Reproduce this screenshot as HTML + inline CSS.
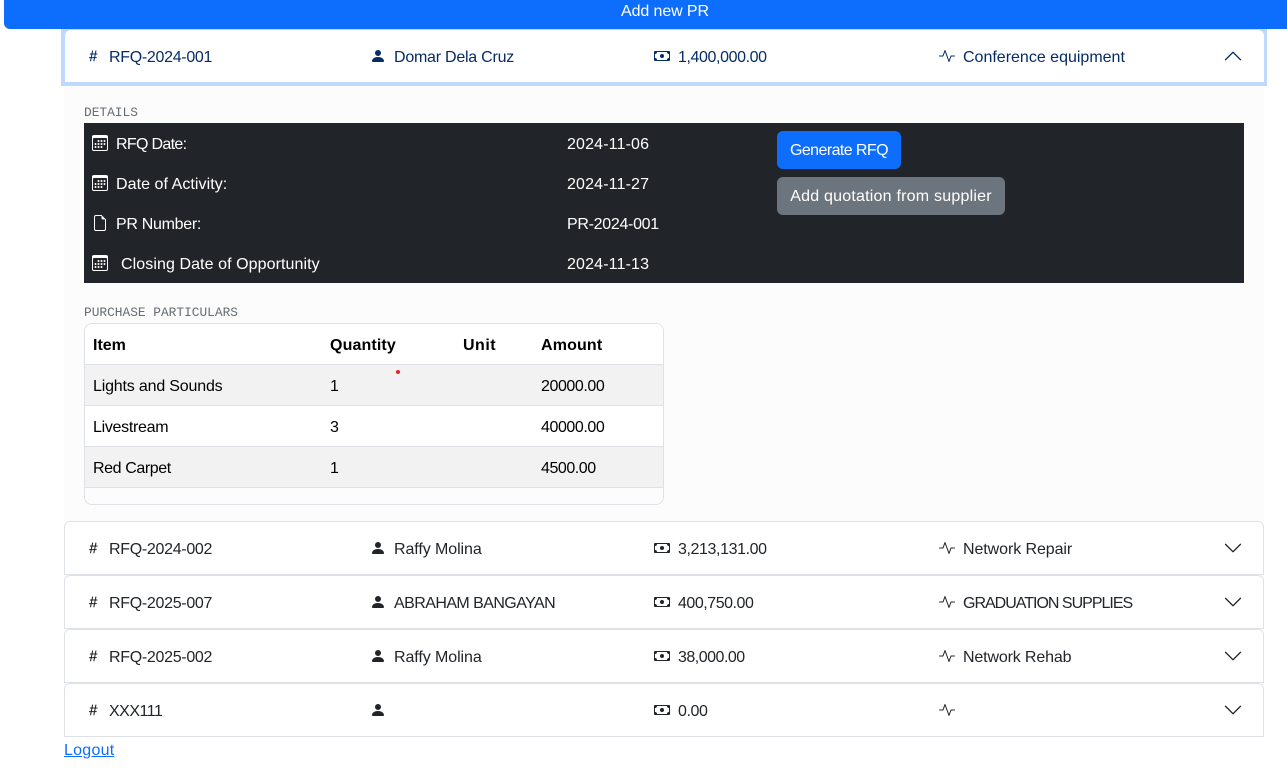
<!DOCTYPE html>
<html lang="en">
<head>
<meta charset="utf-8">
<title>RFQ</title>
<style>
html,body{margin:0;padding:0;background:#fff;}
body{width:1287px;height:771px;overflow:hidden;position:relative;font-family:"Liberation Sans",sans-serif;font-size:16px;color:#212529;}
.a{position:absolute;white-space:nowrap;line-height:24px;margin-top:1px;}
svg{position:absolute;fill:currentColor;display:block;margin-top:-1px;}
svg.w,svg[width="20"]{margin-top:0;}
.top{position:absolute;left:4px;top:0;width:1320px;height:29px;background:#0d6efd;border-radius:0 0 6px 6px;color:#fff;text-align:center;line-height:21px;padding-top:0;}
.top span{position:relative;top:1px;left:1px;letter-spacing:-.1px;}
.item{position:absolute;left:64px;width:1198px;height:52px;background:#fff;border:1px solid #dee2e6;border-radius:6px 6px 0 0;}
.open{position:absolute;left:61px;top:29px;width:1206px;height:57px;background:#bfd9fe;border-radius:0;}
.openin{position:absolute;left:65px;top:30px;width:1199px;height:52px;background:#fff;border-radius:6px 6px 0 0;}
.body{position:absolute;left:64px;top:86px;width:1200px;height:435px;background:#fcfcfc;}
.dark{position:absolute;left:84px;top:123px;width:1160px;height:160px;background:#212529;}
.lbl{position:absolute;left:84px;font-family:"Liberation Mono",monospace;font-size:12.83px;line-height:16px;color:#666c73;white-space:nowrap;}
.w{color:#fff;}
.btn{position:absolute;left:777px;height:38px;border-radius:6px;color:#fff;line-height:40px;text-align:center;white-space:nowrap;}
.tbl{position:absolute;left:84px;top:323px;width:578px;height:180px;border:1px solid #dee2e6;border-radius:8px;background:#fcfcfc;overflow:hidden;}
.r{position:absolute;left:0;width:578px;height:40px;border-bottom:1px solid #dee2e6;}
.k{color:#000;}
.b{font-weight:bold;}
.n{color:#052c65;}
</style>
</head>
<body>
<div class="top"><span>Add new PR</span></div>

<div class="open"></div>
<div class="openin"></div>
<div class="body"></div>

<svg class="n" style="left:85px;top:49px" width="16" height="16" viewBox="0 0 16 16"><path d="M8.39 12.648a1.32 1.32 0 0 0-.015.18c0 .305.21.508.5.508.266 0 .492-.172.555-.477l.554-2.703h1.204c.421 0 .617-.234.617-.547 0-.312-.188-.53-.617-.53h-.985l.516-2.524h1.265c.43 0 .618-.227.618-.547 0-.313-.188-.524-.618-.524h-1.046l.476-2.304a1.06 1.06 0 0 0 .016-.164.51.51 0 0 0-.516-.516.54.54 0 0 0-.539.43l-.523 2.554H7.617l.477-2.304c.008-.04.015-.118.015-.164a.512.512 0 0 0-.523-.516.539.539 0 0 0-.531.43L6.53 5.484H5.414c-.43 0-.617.22-.617.532 0 .312.187.539.617.539h.906l-.515 2.523H4.609c-.421 0-.609.219-.609.531 0 .313.188.547.61.547h.976l-.516 2.492c-.008.04-.015.125-.015.18 0 .305.21.508.5.508.265 0 .492-.172.554-.477l.555-2.703h2.242l-.515 2.492zm-1-6.109h2.266l-.515 2.563H6.859l.532-2.563z"/></svg>
<div class="a n" style="left:109px;top:45px;letter-spacing:-.3px">RFQ-2024-001</div>
<svg class="n" style="left:370px;top:49px" width="16" height="16" viewBox="0 0 16 16"><path d="M3 14s-1 0-1-1 1-4 6-4 6 3 6 4-1 1-1 1H3Zm5-6a3 3 0 1 0 0-6 3 3 0 0 0 0 6Z"/></svg>
<div class="a n" style="left:394px;top:45px;letter-spacing:-.24px">Domar Dela Cruz</div>
<svg class="n" style="left:654px;top:49px" width="16" height="16" viewBox="0 0 16 16"><path d="M8 10a2 2 0 1 0 0-4 2 2 0 0 0 0 4z"/><path d="M0 4a1 1 0 0 1 1-1h14a1 1 0 0 1 1 1v8a1 1 0 0 1-1 1H1a1 1 0 0 1-1-1V4zm3 0a2 2 0 0 1-2 2v4a2 2 0 0 1 2 2h10a2 2 0 0 1 2-2V6a2 2 0 0 1-2-2H3z"/></svg>
<div class="a n" style="left:678px;top:45px;letter-spacing:-.4px">1,400,000.00</div>
<svg class="n" style="left:939px;top:49px" width="16" height="16" viewBox="0 0 16 16"><path d="M6 2a.5.5 0 0 1 .47.33L10 12.036l1.53-4.208A.5.5 0 0 1 12 7.5h3.5a.5.5 0 0 1 0 1h-3.15l-1.88 5.17a.5.5 0 0 1-.94 0L6 3.964 4.47 8.171A.5.5 0 0 1 4 8.5H.5a.5.5 0 0 1 0-1h3.15l1.88-5.17A.5.5 0 0 1 6 2Z"/></svg>
<div class="a n" style="left:963px;top:45px">Conference equipment</div>
<svg class="n" style="left:1223px;top:46px;transform:rotate(180deg)" width="20" height="20" viewBox="0 0 16 16"><path fill-rule="evenodd" d="M1.646 4.646a.5.5 0 0 1 .708 0L8 10.293l5.646-5.647a.5.5 0 0 1 .708.708l-6 6a.5.5 0 0 1-.708 0l-6-6a.5.5 0 0 1 0-.708z"/></svg>

<div class="lbl" style="top:105px">DETAILS</div>
<div class="dark"></div>

<svg class="w" style="left:92px;top:135px" width="16" height="16" viewBox="0 0 16 16"><path d="M14 0H2a2 2 0 0 0-2 2v12a2 2 0 0 0 2 2h12a2 2 0 0 0 2-2V2a2 2 0 0 0-2-2zM1 3.857C1 3.384 1.448 3 2 3h12c.552 0 1 .384 1 .857v10.286c0 .473-.448.857-1 .857H2c-.552 0-1-.384-1-.857V3.857z"/><path d="M6.5 7a1 1 0 1 0 0-2 1 1 0 0 0 0 2zm3 0a1 1 0 1 0 0-2 1 1 0 0 0 0 2zm3 0a1 1 0 1 0 0-2 1 1 0 0 0 0 2zm-9 3a1 1 0 1 0 0-2 1 1 0 0 0 0 2zm3 0a1 1 0 1 0 0-2 1 1 0 0 0 0 2zm3 0a1 1 0 1 0 0-2 1 1 0 0 0 0 2zm3 0a1 1 0 1 0 0-2 1 1 0 0 0 0 2zm-9 3a1 1 0 1 0 0-2 1 1 0 0 0 0 2zm3 0a1 1 0 1 0 0-2 1 1 0 0 0 0 2zm3 0a1 1 0 1 0 0-2 1 1 0 0 0 0 2z"/></svg>
<div class="a w" style="left:116px;top:132px;letter-spacing:-.67px">RFQ Date:</div>
<div class="a w" style="left:567px;top:132px;letter-spacing:.15px">2024-11-06</div>

<svg class="w" style="left:92px;top:175px" width="16" height="16" viewBox="0 0 16 16"><path d="M14 0H2a2 2 0 0 0-2 2v12a2 2 0 0 0 2 2h12a2 2 0 0 0 2-2V2a2 2 0 0 0-2-2zM1 3.857C1 3.384 1.448 3 2 3h12c.552 0 1 .384 1 .857v10.286c0 .473-.448.857-1 .857H2c-.552 0-1-.384-1-.857V3.857z"/><path d="M6.5 7a1 1 0 1 0 0-2 1 1 0 0 0 0 2zm3 0a1 1 0 1 0 0-2 1 1 0 0 0 0 2zm3 0a1 1 0 1 0 0-2 1 1 0 0 0 0 2zm-9 3a1 1 0 1 0 0-2 1 1 0 0 0 0 2zm3 0a1 1 0 1 0 0-2 1 1 0 0 0 0 2zm3 0a1 1 0 1 0 0-2 1 1 0 0 0 0 2zm3 0a1 1 0 1 0 0-2 1 1 0 0 0 0 2zm-9 3a1 1 0 1 0 0-2 1 1 0 0 0 0 2zm3 0a1 1 0 1 0 0-2 1 1 0 0 0 0 2zm3 0a1 1 0 1 0 0-2 1 1 0 0 0 0 2z"/></svg>
<div class="a w" style="left:116px;top:172px;letter-spacing:.06px">Date of Activity:</div>
<div class="a w" style="left:567px;top:172px;letter-spacing:.15px">2024-11-27</div>

<svg class="w" style="left:92px;top:215px" width="16" height="16" viewBox="0 0 16 16"><path d="M14 4.5V14a2 2 0 0 1-2 2H4a2 2 0 0 1-2-2V2a2 2 0 0 1 2-2h5.5L14 4.5zm-3 0A1.5 1.5 0 0 1 9.5 3V1H4a1 1 0 0 0-1 1v12a1 1 0 0 0 1 1h8a1 1 0 0 0 1-1V4.5h-2z"/></svg>
<div class="a w" style="left:116px;top:212px;letter-spacing:-.3px">PR Number:</div>
<div class="a w" style="left:567px;top:212px;letter-spacing:-.3px">PR-2024-001</div>

<svg class="w" style="left:92px;top:255px" width="16" height="16" viewBox="0 0 16 16"><path d="M14 0H2a2 2 0 0 0-2 2v12a2 2 0 0 0 2 2h12a2 2 0 0 0 2-2V2a2 2 0 0 0-2-2zM1 3.857C1 3.384 1.448 3 2 3h12c.552 0 1 .384 1 .857v10.286c0 .473-.448.857-1 .857H2c-.552 0-1-.384-1-.857V3.857z"/><path d="M6.5 7a1 1 0 1 0 0-2 1 1 0 0 0 0 2zm3 0a1 1 0 1 0 0-2 1 1 0 0 0 0 2zm3 0a1 1 0 1 0 0-2 1 1 0 0 0 0 2zm-9 3a1 1 0 1 0 0-2 1 1 0 0 0 0 2zm3 0a1 1 0 1 0 0-2 1 1 0 0 0 0 2zm3 0a1 1 0 1 0 0-2 1 1 0 0 0 0 2zm3 0a1 1 0 1 0 0-2 1 1 0 0 0 0 2zm-9 3a1 1 0 1 0 0-2 1 1 0 0 0 0 2zm3 0a1 1 0 1 0 0-2 1 1 0 0 0 0 2zm3 0a1 1 0 1 0 0-2 1 1 0 0 0 0 2z"/></svg>
<div class="a w" style="left:121px;top:252px;letter-spacing:.08px">Closing Date of Opportunity</div>
<div class="a w" style="left:567px;top:252px;letter-spacing:.15px">2024-11-13</div>

<div class="btn" style="top:131px;width:124px;background:#0d6efd;letter-spacing:-.58px">Generate RFQ</div>
<div class="btn" style="top:177px;width:228px;background:#6c757d;letter-spacing:.22px">Add quotation from supplier</div>

<div class="lbl" style="top:305px">PURCHASE PARTICULARS</div>
<div class="tbl">
  <div class="r" style="top:0;background:#fff"></div>
  <div class="r" style="top:41px;background:#f2f2f2"></div>
  <div class="r" style="top:82px;background:#fff"></div>
  <div class="r" style="top:123px;background:#f2f2f2"></div>
</div>
<div class="a k b" style="left:93px;top:333px">Item</div>
<div class="a k b" style="left:330px;top:333px;letter-spacing:.12px">Quantity</div>
<div class="a k b" style="left:463px;top:333px;letter-spacing:.5px">Unit</div>
<div class="a k b" style="left:541px;top:333px;letter-spacing:.15px">Amount</div>
<div class="a k" style="left:93px;top:374px;letter-spacing:-.18px">Lights and Sounds</div>
<div class="a k" style="left:330px;top:374px">1</div>
<div class="a k" style="left:541px;top:374px;letter-spacing:-.42px">20000.00</div>
<div class="a k" style="left:93px;top:415px;letter-spacing:-.3px">Livestream</div>
<div class="a k" style="left:330px;top:415px">3</div>
<div class="a k" style="left:541px;top:415px;letter-spacing:-.42px">40000.00</div>
<div class="a k" style="left:93px;top:456px;letter-spacing:-.4px">Red Carpet</div>
<div class="a k" style="left:330px;top:456px">1</div>
<div class="a k" style="left:541px;top:456px;letter-spacing:-.45px">4500.00</div>
<div style="position:absolute;left:396px;top:370px;width:4px;height:4px;border-radius:50%;background:#e8202f"></div>

<div class="item" style="top:521px"></div>
<div class="item" style="top:575px"></div>
<div class="item" style="top:629px"></div>
<div class="item" style="top:683px"></div>

<svg style="left:85px;top:541px" width="16" height="16" viewBox="0 0 16 16"><path d="M8.39 12.648a1.32 1.32 0 0 0-.015.18c0 .305.21.508.5.508.266 0 .492-.172.555-.477l.554-2.703h1.204c.421 0 .617-.234.617-.547 0-.312-.188-.53-.617-.53h-.985l.516-2.524h1.265c.43 0 .618-.227.618-.547 0-.313-.188-.524-.618-.524h-1.046l.476-2.304a1.06 1.06 0 0 0 .016-.164.51.51 0 0 0-.516-.516.54.54 0 0 0-.539.43l-.523 2.554H7.617l.477-2.304c.008-.04.015-.118.015-.164a.512.512 0 0 0-.523-.516.539.539 0 0 0-.531.43L6.53 5.484H5.414c-.43 0-.617.22-.617.532 0 .312.187.539.617.539h.906l-.515 2.523H4.609c-.421 0-.609.219-.609.531 0 .313.188.547.61.547h.976l-.516 2.492c-.008.04-.015.125-.015.18 0 .305.21.508.5.508.265 0 .492-.172.554-.477l.555-2.703h2.242l-.515 2.492zm-1-6.109h2.266l-.515 2.563H6.859l.532-2.563z"/></svg>
<div class="a" style="left:109px;top:537px;letter-spacing:-.3px">RFQ-2024-002</div>
<svg style="left:370px;top:541px" width="16" height="16" viewBox="0 0 16 16"><path d="M3 14s-1 0-1-1 1-4 6-4 6 3 6 4-1 1-1 1H3Zm5-6a3 3 0 1 0 0-6 3 3 0 0 0 0 6Z"/></svg>
<div class="a" style="left:394px;top:537px;letter-spacing:-.08px">Raffy Molina</div>
<svg style="left:654px;top:541px" width="16" height="16" viewBox="0 0 16 16"><path d="M8 10a2 2 0 1 0 0-4 2 2 0 0 0 0 4z"/><path d="M0 4a1 1 0 0 1 1-1h14a1 1 0 0 1 1 1v8a1 1 0 0 1-1 1H1a1 1 0 0 1-1-1V4zm3 0a2 2 0 0 1-2 2v4a2 2 0 0 1 2 2h10a2 2 0 0 1 2-2V6a2 2 0 0 1-2-2H3z"/></svg>
<div class="a" style="left:678px;top:537px;letter-spacing:-.4px">3,213,131.00</div>
<svg style="left:939px;top:541px" width="16" height="16" viewBox="0 0 16 16"><path d="M6 2a.5.5 0 0 1 .47.33L10 12.036l1.53-4.208A.5.5 0 0 1 12 7.5h3.5a.5.5 0 0 1 0 1h-3.15l-1.88 5.17a.5.5 0 0 1-.94 0L6 3.964 4.47 8.171A.5.5 0 0 1 4 8.5H.5a.5.5 0 0 1 0-1h3.15l1.88-5.17A.5.5 0 0 1 6 2Z"/></svg>
<div class="a" style="left:963px;top:537px;letter-spacing:-.08px">Network Repair</div>
<svg style="left:1223px;top:538px" width="20" height="20" viewBox="0 0 16 16"><path fill-rule="evenodd" d="M1.646 4.646a.5.5 0 0 1 .708 0L8 10.293l5.646-5.647a.5.5 0 0 1 .708.708l-6 6a.5.5 0 0 1-.708 0l-6-6a.5.5 0 0 1 0-.708z"/></svg>

<svg style="left:85px;top:595px" width="16" height="16" viewBox="0 0 16 16"><path d="M8.39 12.648a1.32 1.32 0 0 0-.015.18c0 .305.21.508.5.508.266 0 .492-.172.555-.477l.554-2.703h1.204c.421 0 .617-.234.617-.547 0-.312-.188-.53-.617-.53h-.985l.516-2.524h1.265c.43 0 .618-.227.618-.547 0-.313-.188-.524-.618-.524h-1.046l.476-2.304a1.06 1.06 0 0 0 .016-.164.51.51 0 0 0-.516-.516.54.54 0 0 0-.539.43l-.523 2.554H7.617l.477-2.304c.008-.04.015-.118.015-.164a.512.512 0 0 0-.523-.516.539.539 0 0 0-.531.43L6.53 5.484H5.414c-.43 0-.617.22-.617.532 0 .312.187.539.617.539h.906l-.515 2.523H4.609c-.421 0-.609.219-.609.531 0 .313.188.547.61.547h.976l-.516 2.492c-.008.04-.015.125-.015.18 0 .305.21.508.5.508.265 0 .492-.172.554-.477l.555-2.703h2.242l-.515 2.492zm-1-6.109h2.266l-.515 2.563H6.859l.532-2.563z"/></svg>
<div class="a" style="left:109px;top:591px;letter-spacing:-.3px">RFQ-2025-007</div>
<svg style="left:370px;top:595px" width="16" height="16" viewBox="0 0 16 16"><path d="M3 14s-1 0-1-1 1-4 6-4 6 3 6 4-1 1-1 1H3Zm5-6a3 3 0 1 0 0-6 3 3 0 0 0 0 6Z"/></svg>
<div class="a" style="left:394px;top:591px;letter-spacing:-.56px">ABRAHAM BANGAYAN</div>
<svg style="left:654px;top:595px" width="16" height="16" viewBox="0 0 16 16"><path d="M8 10a2 2 0 1 0 0-4 2 2 0 0 0 0 4z"/><path d="M0 4a1 1 0 0 1 1-1h14a1 1 0 0 1 1 1v8a1 1 0 0 1-1 1H1a1 1 0 0 1-1-1V4zm3 0a2 2 0 0 1-2 2v4a2 2 0 0 1 2 2h10a2 2 0 0 1 2-2V6a2 2 0 0 1-2-2H3z"/></svg>
<div class="a" style="left:678px;top:591px;letter-spacing:-.47px">400,750.00</div>
<svg style="left:939px;top:595px" width="16" height="16" viewBox="0 0 16 16"><path d="M6 2a.5.5 0 0 1 .47.33L10 12.036l1.53-4.208A.5.5 0 0 1 12 7.5h3.5a.5.5 0 0 1 0 1h-3.15l-1.88 5.17a.5.5 0 0 1-.94 0L6 3.964 4.47 8.171A.5.5 0 0 1 4 8.5H.5a.5.5 0 0 1 0-1h3.15l1.88-5.17A.5.5 0 0 1 6 2Z"/></svg>
<div class="a" style="left:963px;top:591px;letter-spacing:-1px">GRADUATION SUPPLIES</div>
<svg style="left:1223px;top:592px" width="20" height="20" viewBox="0 0 16 16"><path fill-rule="evenodd" d="M1.646 4.646a.5.5 0 0 1 .708 0L8 10.293l5.646-5.647a.5.5 0 0 1 .708.708l-6 6a.5.5 0 0 1-.708 0l-6-6a.5.5 0 0 1 0-.708z"/></svg>

<svg style="left:85px;top:649px" width="16" height="16" viewBox="0 0 16 16"><path d="M8.39 12.648a1.32 1.32 0 0 0-.015.18c0 .305.21.508.5.508.266 0 .492-.172.555-.477l.554-2.703h1.204c.421 0 .617-.234.617-.547 0-.312-.188-.53-.617-.53h-.985l.516-2.524h1.265c.43 0 .618-.227.618-.547 0-.313-.188-.524-.618-.524h-1.046l.476-2.304a1.06 1.06 0 0 0 .016-.164.51.51 0 0 0-.516-.516.54.54 0 0 0-.539.43l-.523 2.554H7.617l.477-2.304c.008-.04.015-.118.015-.164a.512.512 0 0 0-.523-.516.539.539 0 0 0-.531.43L6.53 5.484H5.414c-.43 0-.617.22-.617.532 0 .312.187.539.617.539h.906l-.515 2.523H4.609c-.421 0-.609.219-.609.531 0 .313.188.547.61.547h.976l-.516 2.492c-.008.04-.015.125-.015.18 0 .305.21.508.5.508.265 0 .492-.172.554-.477l.555-2.703h2.242l-.515 2.492zm-1-6.109h2.266l-.515 2.563H6.859l.532-2.563z"/></svg>
<div class="a" style="left:109px;top:645px;letter-spacing:-.3px">RFQ-2025-002</div>
<svg style="left:370px;top:649px" width="16" height="16" viewBox="0 0 16 16"><path d="M3 14s-1 0-1-1 1-4 6-4 6 3 6 4-1 1-1 1H3Zm5-6a3 3 0 1 0 0-6 3 3 0 0 0 0 6Z"/></svg>
<div class="a" style="left:394px;top:645px;letter-spacing:-.08px">Raffy Molina</div>
<svg style="left:654px;top:649px" width="16" height="16" viewBox="0 0 16 16"><path d="M8 10a2 2 0 1 0 0-4 2 2 0 0 0 0 4z"/><path d="M0 4a1 1 0 0 1 1-1h14a1 1 0 0 1 1 1v8a1 1 0 0 1-1 1H1a1 1 0 0 1-1-1V4zm3 0a2 2 0 0 1-2 2v4a2 2 0 0 1 2 2h10a2 2 0 0 1 2-2V6a2 2 0 0 1-2-2H3z"/></svg>
<div class="a" style="left:678px;top:645px;letter-spacing:-.5px">38,000.00</div>
<svg style="left:939px;top:649px" width="16" height="16" viewBox="0 0 16 16"><path d="M6 2a.5.5 0 0 1 .47.33L10 12.036l1.53-4.208A.5.5 0 0 1 12 7.5h3.5a.5.5 0 0 1 0 1h-3.15l-1.88 5.17a.5.5 0 0 1-.94 0L6 3.964 4.47 8.171A.5.5 0 0 1 4 8.5H.5a.5.5 0 0 1 0-1h3.15l1.88-5.17A.5.5 0 0 1 6 2Z"/></svg>
<div class="a" style="left:963px;top:645px;letter-spacing:-.15px">Network Rehab</div>
<svg style="left:1223px;top:646px" width="20" height="20" viewBox="0 0 16 16"><path fill-rule="evenodd" d="M1.646 4.646a.5.5 0 0 1 .708 0L8 10.293l5.646-5.647a.5.5 0 0 1 .708.708l-6 6a.5.5 0 0 1-.708 0l-6-6a.5.5 0 0 1 0-.708z"/></svg>

<svg style="left:85px;top:703px" width="16" height="16" viewBox="0 0 16 16"><path d="M8.39 12.648a1.32 1.32 0 0 0-.015.18c0 .305.21.508.5.508.266 0 .492-.172.555-.477l.554-2.703h1.204c.421 0 .617-.234.617-.547 0-.312-.188-.53-.617-.53h-.985l.516-2.524h1.265c.43 0 .618-.227.618-.547 0-.313-.188-.524-.618-.524h-1.046l.476-2.304a1.06 1.06 0 0 0 .016-.164.51.51 0 0 0-.516-.516.54.54 0 0 0-.539.43l-.523 2.554H7.617l.477-2.304c.008-.04.015-.118.015-.164a.512.512 0 0 0-.523-.516.539.539 0 0 0-.531.43L6.53 5.484H5.414c-.43 0-.617.22-.617.532 0 .312.187.539.617.539h.906l-.515 2.523H4.609c-.421 0-.609.219-.609.531 0 .313.188.547.61.547h.976l-.516 2.492c-.008.04-.015.125-.015.18 0 .305.21.508.5.508.265 0 .492-.172.554-.477l.555-2.703h2.242l-.515 2.492zm-1-6.109h2.266l-.515 2.563H6.859l.532-2.563z"/></svg>
<div class="a" style="left:109px;top:699px;letter-spacing:-.5px">XXX111</div>
<svg style="left:370px;top:703px" width="16" height="16" viewBox="0 0 16 16"><path d="M3 14s-1 0-1-1 1-4 6-4 6 3 6 4-1 1-1 1H3Zm5-6a3 3 0 1 0 0-6 3 3 0 0 0 0 6Z"/></svg>
<svg style="left:654px;top:703px" width="16" height="16" viewBox="0 0 16 16"><path d="M8 10a2 2 0 1 0 0-4 2 2 0 0 0 0 4z"/><path d="M0 4a1 1 0 0 1 1-1h14a1 1 0 0 1 1 1v8a1 1 0 0 1-1 1H1a1 1 0 0 1-1-1V4zm3 0a2 2 0 0 1-2 2v4a2 2 0 0 1 2 2h10a2 2 0 0 1 2-2V6a2 2 0 0 1-2-2H3z"/></svg>
<div class="a" style="left:678px;top:699px;letter-spacing:-.4px">0.00</div>
<svg style="left:939px;top:703px" width="16" height="16" viewBox="0 0 16 16"><path d="M6 2a.5.5 0 0 1 .47.33L10 12.036l1.53-4.208A.5.5 0 0 1 12 7.5h3.5a.5.5 0 0 1 0 1h-3.15l-1.88 5.17a.5.5 0 0 1-.94 0L6 3.964 4.47 8.171A.5.5 0 0 1 4 8.5H.5a.5.5 0 0 1 0-1h3.15l1.88-5.17A.5.5 0 0 1 6 2Z"/></svg>
<svg style="left:1223px;top:700px" width="20" height="20" viewBox="0 0 16 16"><path fill-rule="evenodd" d="M1.646 4.646a.5.5 0 0 1 .708 0L8 10.293l5.646-5.647a.5.5 0 0 1 .708.708l-6 6a.5.5 0 0 1-.708 0l-6-6a.5.5 0 0 1 0-.708z"/></svg>

<a class="a" href="#" style="left:64px;top:738px;color:#0d6efd;text-decoration:underline;letter-spacing:.25px">Logout</a>
</body>
</html>
